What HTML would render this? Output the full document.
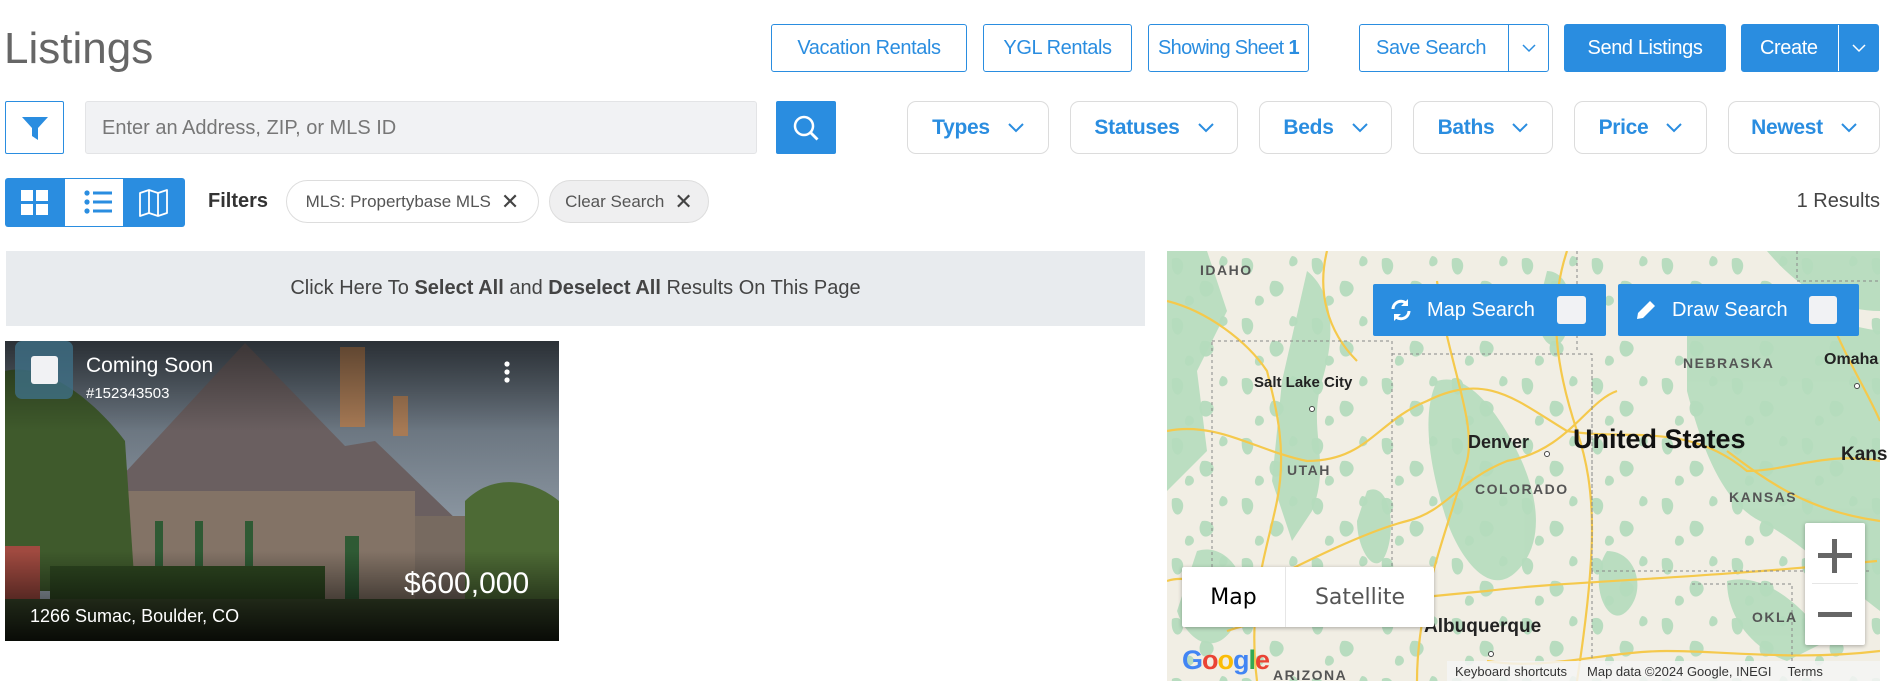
<!DOCTYPE html>
<html><head><meta charset="utf-8"><style>
*{box-sizing:border-box;margin:0;padding:0}
body{width:1887px;height:685px;overflow:hidden;background:#fff;font-family:"Liberation Sans",sans-serif;position:relative;color:#333}
.a{position:absolute}
.ob{position:absolute;top:24px;height:48px;border:1.5px solid #2a8de0;border-radius:3px;color:#2a8de0;font-size:20px;display:flex;align-items:center;justify-content:center;letter-spacing:-0.4px;white-space:nowrap}
.fb{position:absolute;top:101px;height:53px;border:1px solid #dcdcdc;border-radius:9px;color:#2a8de0;font-size:21px;font-weight:bold;display:flex;align-items:center;justify-content:center;gap:18px;letter-spacing:-0.3px}
.chip{position:absolute;top:180px;height:43px;border:1px solid #ddd;border-radius:22px;font-size:17px;color:#555;display:flex;align-items:center;justify-content:center;gap:10px}
.ml{position:absolute;font-family:"Liberation Sans",sans-serif;font-size:14px;color:#555;font-weight:bold;letter-spacing:1.5px}
</style></head><body>
<div class="a" style="left:4px;top:24px;font-size:44px;color:#666">Listings</div>

<div class="ob" style="left:771px;width:196px">Vacation Rentals</div>
<div class="ob" style="left:983px;width:149px">YGL Rentals</div>
<div class="ob" style="left:1148px;width:161px;letter-spacing:-0.7px">Showing Sheet <b style="margin-left:5px">1</b></div>
<div class="ob" style="left:1359px;width:190px;justify-content:flex-start;padding-left:16px">Save Search
 <div class="a" style="left:148px;top:0;bottom:0;border-left:1.5px solid #2a8de0;width:40px;display:flex;align-items:center;justify-content:center"><svg width="14" height="9"><path d="M1 1l6 6 6-6" fill="none" stroke="#2a8de0" stroke-width="1.5"/></svg></div></div>
<div class="ob" style="left:1564px;width:162px;background:#2a8de0;color:#fff">Send Listings</div>
<div class="ob" style="left:1741px;width:138px;background:#2a8de0;color:#fff;justify-content:flex-start;padding-left:18px">Create
 <div class="a" style="left:96px;top:0;bottom:0;border-left:1px solid #fff;width:41px;display:flex;align-items:center;justify-content:center"><svg width="14" height="9"><path d="M1 1l6 6 6-6" fill="none" stroke="#fff" stroke-width="1.5"/></svg></div></div>

<div class="a" style="left:5px;top:101px;width:59px;height:53px;border:1.5px solid #2a8de0;border-radius:2px;display:flex;align-items:center;justify-content:center"><svg width="28" height="28" viewBox="0 0 28 28"><path d="M1 3h26l-10 11v12l-6-4v-8z" fill="#2a8de0"/></svg></div>
<div class="a" style="left:85px;top:101px;width:672px;height:53px;background:#f1f2f4;border:1px solid #e3e4e6;border-radius:3px;font-size:20px;color:#777;padding:15px 16px">Enter an Address, ZIP, or MLS ID</div>
<div class="a" style="left:776px;top:101px;width:60px;height:53px;background:#2a8de0;border-radius:2px;display:flex;align-items:center;justify-content:center"><svg width="30" height="30" viewBox="0 0 30 30"><circle cx="13" cy="13" r="9" fill="none" stroke="#fff" stroke-width="2.5"/><path d="M19.5 19.5l7 7" stroke="#fff" stroke-width="2.8"/></svg></div>

<div class="fb" style="left:907px;width:142px">Types <svg width="16" height="10"><path d="M1 1l7 7 7-7" fill="none" stroke="#2a8de0" stroke-width="2"/></svg></div>
<div class="fb" style="left:1070px;width:168px">Statuses <svg width="16" height="10"><path d="M1 1l7 7 7-7" fill="none" stroke="#2a8de0" stroke-width="2"/></svg></div>
<div class="fb" style="left:1259px;width:133px">Beds <svg width="16" height="10"><path d="M1 1l7 7 7-7" fill="none" stroke="#2a8de0" stroke-width="2"/></svg></div>
<div class="fb" style="left:1413px;width:140px">Baths <svg width="16" height="10"><path d="M1 1l7 7 7-7" fill="none" stroke="#2a8de0" stroke-width="2"/></svg></div>
<div class="fb" style="left:1574px;width:133px">Price <svg width="16" height="10"><path d="M1 1l7 7 7-7" fill="none" stroke="#2a8de0" stroke-width="2"/></svg></div>
<div class="fb" style="left:1728px;width:152px">Newest <svg width="16" height="10"><path d="M1 1l7 7 7-7" fill="none" stroke="#2a8de0" stroke-width="2"/></svg></div>

<div class="a" style="left:5px;top:178px;width:180px;height:49px;background:#2a8de0;border-radius:3px"></div>
<div class="a" style="left:65px;top:179px;width:58px;height:47px;background:#fff"></div>
<svg class="a" style="left:5px;top:178px" width="180" height="49">
 <g fill="#fff"><rect x="16" y="12" width="12" height="11"/><rect x="31" y="12" width="12" height="11"/><rect x="16" y="26" width="12" height="11"/><rect x="31" y="26" width="12" height="11"/></g>
 <g fill="#2a8de0"><circle cx="82" cy="15" r="2.6"/><circle cx="82" cy="24" r="2.6"/><circle cx="82" cy="33" r="2.6"/><rect x="88" y="13.5" width="19" height="3"/><rect x="88" y="22.5" width="19" height="3"/><rect x="88" y="31.5" width="19" height="3"/></g>
 <path d="M135 15l9-3 9 3 9-3v23l-9 3-9-3-9 3z M144 12v23 M153 15v23" fill="none" stroke="#fff" stroke-width="1.8" stroke-linejoin="round"/>
</svg>
<div class="a" style="left:208px;top:190px;font-size:20px;font-weight:bold;color:#333">Filters</div>
<div class="chip" style="left:286px;width:253px">MLS: Propertybase MLS <span style="font-size:22px;color:#444">✕</span></div>
<div class="chip" style="left:549px;width:160px;background:#efeff0">Clear Search <span style="font-size:22px;color:#444">✕</span></div>
<div class="a" style="right:7px;top:190px;font-size:20px;color:#444">1 Results</div>

<div class="a" style="left:6px;top:251px;width:1139px;height:75px;background:#e8ebee;display:flex;align-items:center;justify-content:center;font-size:20px;color:#444">Click Here To&nbsp;<b>Select All</b>&nbsp;and&nbsp;<b>Deselect All</b>&nbsp;Results On This Page</div>

<!-- card -->
<svg class="a" style="left:5px;top:341px" width="554" height="300" viewBox="0 0 554 300">
 <defs><linearGradient id="sky" x1="0" y1="0" x2="0" y2="1"><stop offset="0" stop-color="#4e5862"/><stop offset="1" stop-color="#b3bfcb"/></linearGradient>
 <linearGradient id="sh" x1="0" y1="0" x2="0" y2="1"><stop offset="0" stop-color="#000" stop-opacity=".45"/><stop offset=".3" stop-color="#000" stop-opacity="0"/><stop offset=".7" stop-color="#000" stop-opacity="0"/><stop offset="1" stop-color="#000" stop-opacity=".85"/></linearGradient></defs>
 <rect width="554" height="300" fill="url(#sky)"/>
 <rect x="335" y="6" width="25" height="80" fill="#a77a55"/><rect x="388" y="55" width="15" height="40" fill="#a77a55"/>
 <path d="M105 148L240 2 340 105 370 100 455 182 300 165 105 158z" fill="#6a5f60"/>
 <path d="M110 150h300v135H110z" fill="#837366"/><path d="M410 175h60v100h-60z" fill="#776a60"/>
 <g fill="#2f5a34"><rect x="150" y="180" width="8" height="55"/><rect x="190" y="180" width="8" height="55"/><rect x="240" y="180" width="8" height="55"/><rect x="340" y="195" width="14" height="70"/></g>
 <path d="M0 30C40 20 90 60 120 100L130 250H0z" fill="#3f5a2c"/>
 <path d="M460 160c30-30 70-20 94 0v110H460z" fill="#4d6a35"/>
 <rect x="0" y="205" width="35" height="55" fill="#a04a40"/>
 <rect x="45" y="225" width="275" height="45" fill="#2d4620"/>
 <rect x="0" y="258" width="554" height="42" fill="#3b4a2c"/>
 <rect width="554" height="300" fill="url(#sh)"/>
 <rect x="10" y="0" width="58" height="58" rx="7" fill="#3f6f86" opacity=".8"/>
 <rect x="26" y="15" width="27" height="28" rx="3" fill="#f1f2f4"/>
 <g fill="#fff"><circle cx="502" cy="23" r="2.6"/><circle cx="502" cy="31" r="2.6"/><circle cx="502" cy="39" r="2.6"/></g>
</svg>
<div class="a" style="left:86px;top:354px;font-size:21px;color:#fff">Coming Soon</div>
<div class="a" style="left:86px;top:385px;font-size:15px;color:#fff">#152343503</div>
<div class="a" style="left:404px;top:567px;font-size:30px;color:#fff">$600,000</div>
<div class="a" style="left:30px;top:606px;font-size:18px;color:#fff">1266 Sumac, Boulder, CO</div>

<!-- map -->
<svg class="a" style="left:1167px;top:251px" width="713" height="430" viewBox="0 0 713 430">
 <defs><pattern id="bl" width="70" height="60" patternUnits="userSpaceOnUse">
  <path d="M5 8c8-4 14 4 10 12s-12 2-10-12z M35 30c10-2 16 8 8 14s-14-6-8-14z M55 5c6 0 8 8 2 10s-6-6-2-10z M20 45c6-2 10 6 4 9s-8-4-4-9z" fill="#b8dcbf"/></pattern></defs>
 <rect width="713" height="430" fill="#f1eee4"/>
 <rect width="713" height="430" fill="url(#bl)"/>
 <g fill="#b5dcbd" opacity=".9">
  <path d="M0 0h40l20 60-30 60 10 80-40 40H0z"/>
  <path d="M140 20c25 20 30 60 15 110s10 80-10 130l-20 30-20-60 10-100z"/>
  <path d="M270 130c30-10 60 30 80 70s30 90 0 120-60-20-70-50-30-100-10-140z"/>
  <path d="M520 60c60-20 130 10 193 20v280c-40-30-80-70-120-90s-60-80-73-130z"/>
  <path d="M600 0h113v60c-40 0-80-20-113-60z"/>
  <path d="M380 20c20 0 30 30 20 60s-30 10-30-20z"/>
  <path d="M30 300c30-10 60 30 40 70s-50 20-60-10z"/>
  <path d="M440 300c30 0 40 40 20 60s-40-30-20-60z"/>
  <path d="M560 330c40-10 80 30 100 60l-40 20c-30-10-60-40-60-80z"/>
  <path d="M200 240c20-10 30 30 20 60s-30 0-30-30z"/>
 </g>
 <g fill="none" stroke="#f5c94c" stroke-width="2.2">
  <path d="M0 180c50-10 90 20 140 30 60 0 70-40 120-60 60-30 90 0 140 30 60 10 120-10 180 40 40 0 80-20 133-10"/>
  <path d="M0 50c40 10 80 40 100 70 10 40 20 80 10 130-10 50-30 100-20 180"/>
  <path d="M60 380c60-20 150-30 260-40 80-10 180-10 390-30"/>
  <path d="M250 430c0-80 30-150 50-220 10-40-20-100-30-180"/>
  <path d="M0 330c30-10 60 20 100 0s100-50 140-60 50-40 100-60c60-10 80-60 110-70"/>
  <path d="M320 410c60 10 120-10 180-10s130 10 213 0"/>
  <path d="M660 60c20 50 40 80 53 110"/>
  <path d="M160 0c-10 40 0 80 30 110"/><path d="M400 0c-20 60-10 120 10 180s20 120 0 250"/>
  <path d="M560 200c40 30 80 60 153 70"/>
 </g>
 <g fill="none" stroke="#888" stroke-width="1" stroke-dasharray="3 3">
  <path d="M45 90h180v230H45z"/><path d="M225 103h200v220"/><path d="M425 120v200h280"/><path d="M425 320v90"/><path d="M525 333h100v80"/><path d="M410 0v100"/><path d="M630 0v30h83"/>
 </g>
 <g fill="#fff" stroke="#444" stroke-width="1"><circle cx="145" cy="158" r="2.5"/><circle cx="380" cy="203" r="2.5"/><circle cx="690" cy="135" r="2.5"/><circle cx="324" cy="403" r="2.5"/></g>
</svg>
<div class="ml" style="left:1200px;top:262px">IDAHO</div>
<div class="a" style="left:1254px;top:374px;font-size:15px;font-weight:bold;color:#222">Salt Lake City</div>
<div class="ml" style="left:1287px;top:462px">UTAH</div>
<div class="a" style="left:1468px;top:432px;font-size:18px;font-weight:bold;color:#222">Denver</div>
<div class="a" style="left:1573px;top:424px;font-size:27px;font-weight:bold;color:#111">United States</div>
<div class="ml" style="left:1475px;top:481px">COLORADO</div>
<div class="ml" style="left:1683px;top:355px">NEBRASKA</div>
<div class="a" style="left:1824px;top:351px;font-size:16px;font-weight:bold;color:#222">Omaha</div>
<div class="ml" style="left:1729px;top:489px">KANSAS</div>
<div class="a" style="left:1841px;top:444px;font-size:19px;font-weight:bold;color:#222">Kans</div>
<div class="ml" style="left:1752px;top:609px">OKLA</div>
<div class="a" style="left:1424px;top:616px;font-size:19px;font-weight:bold;color:#222">Albuquerque</div>
<div class="ml" style="left:1273px;top:667px">ARIZONA</div>

<div class="a" style="left:1373px;top:284px;width:233px;height:52px;background:#2a8de0;border-radius:2px;color:#fff;font-size:20px;display:flex;align-items:center;padding-left:16px">
 <svg width="24" height="24" viewBox="0 0 24 24"><path d="M4 11a8 8 0 0 1 14-5M20 13a8 8 0 0 1-14 5" fill="none" stroke="#fff" stroke-width="3"/><path d="M19 1v7h-7zM5 23v-7h7z" fill="#fff"/></svg>
 <span style="margin-left:14px">Map Search</span>
 <div class="a" style="right:20px;top:12px;width:29px;height:28px;background:#f1f2f4;border-radius:3px"></div></div>
<div class="a" style="left:1618px;top:284px;width:241px;height:52px;background:#2a8de0;border-radius:2px;color:#fff;font-size:20px;display:flex;align-items:center;padding-left:16px">
 <svg width="24" height="24" viewBox="0 0 24 24"><path d="M3 21l1-6L16 3l5 5L9 20z" fill="#fff"/></svg>
 <span style="margin-left:14px">Draw Search</span>
 <div class="a" style="right:22px;top:12px;width:28px;height:28px;background:#f1f2f4;border-radius:3px"></div></div>

<div class="a" style="left:1182px;top:567px;width:252px;height:60px;background:#fff;border-radius:2px;box-shadow:0 1px 4px rgba(0,0,0,.3);font-family:'DejaVu Sans',sans-serif">
 <div class="a" style="left:0;width:103px;top:0;height:60px;display:flex;align-items:center;justify-content:center;font-size:22px;color:#000">Map</div>
 <div class="a" style="left:103px;top:0;height:60px;border-left:1px solid #e6e6e6;width:149px;display:flex;align-items:center;justify-content:center;font-size:22px;color:#555">Satellite</div></div>

<div class="a" style="left:1805px;top:523px;width:60px;height:122px;background:#fff;border-radius:2px;box-shadow:0 1px 4px rgba(0,0,0,.3)">
 <div class="a" style="left:13px;top:30px;width:34px;height:5px;background:#666"></div><div class="a" style="left:27px;top:16px;width:5px;height:34px;background:#666"></div>
 <div class="a" style="left:7px;top:60px;width:46px;height:1px;background:#e6e6e6"></div>
 <div class="a" style="left:13px;top:89px;width:34px;height:5px;background:#666"></div></div>

<div class="a" style="left:1182px;top:645px;font-size:27px;font-weight:bold;letter-spacing:-1px"><span style="color:#4285f4">G</span><span style="color:#ea4335">o</span><span style="color:#fbbc05">o</span><span style="color:#4285f4">g</span><span style="color:#34a853">l</span><span style="color:#ea4335">e</span></div>
<div class="a" style="left:1447px;top:661px;width:433px;height:20px;background:rgba(245,245,245,.85);font-size:13px;color:#333;display:flex;align-items:center;white-space:nowrap">
 <span style="padding-left:8px">Keyboard shortcuts</span><span style="padding-left:20px">Map data ©2024 Google, INEGI</span><span style="padding-left:16px">Terms</span></div>
</body></html>
